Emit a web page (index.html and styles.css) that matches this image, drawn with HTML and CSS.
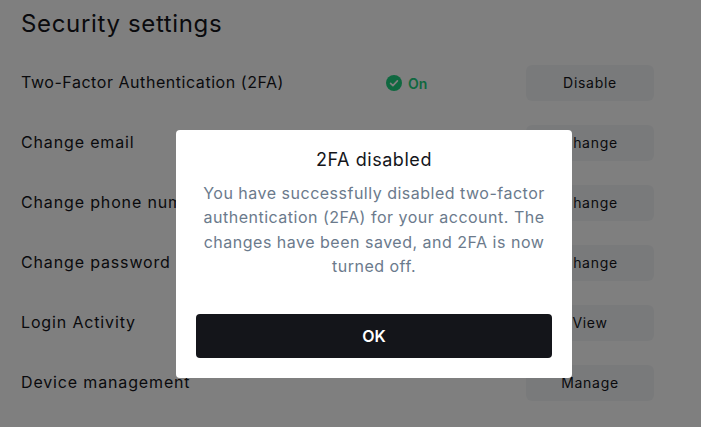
FILE: index.html
```html
<!DOCTYPE html>
<html lang="en">
<head>
<meta charset="utf-8">
<title>Security settings</title>
<link rel="stylesheet" href="styles.css">
</head>
<body>
<main class="page">
  <h1 class="title">Security settings</h1>
  <div class="rows">
    <div class="row">
      <span class="label label-long">Two-Factor Authentication (2FA)</span>
      <span class="status">
        <svg class="status-icon" viewBox="0 0 16 16" width="16" height="16"><circle cx="8" cy="8" r="8" fill="#1fd080"/><path d="M4.6 8.3l2.3 2.3 4.5-4.7" fill="none" stroke="#fff" stroke-width="1.7" stroke-linecap="round" stroke-linejoin="round"/></svg>
        On
      </span>
      <button class="action">Disable</button>
    </div>
    <div class="row"><span class="label">Change email</span><span></span><button class="action">Change</button></div>
    <div class="row"><span class="label">Change phone number</span><span></span><button class="action">Change</button></div>
    <div class="row"><span class="label">Change password</span><span></span><button class="action">Change</button></div>
    <div class="row"><span class="label">Login Activity</span><span></span><button class="action">View</button></div>
    <div class="row"><span class="label">Device management</span><span></span><button class="action">Manage</button></div>
  </div>
</main>
<div class="overlay">
  <div class="modal">
    <h2 class="modal-title">2FA disabled</h2>
    <p class="modal-text">You have successfully disabled two-factor authentication (2FA) for your account. The changes have been saved, and 2FA is now turned off.</p>
    <button class="ok">OK</button>
  </div>
</div>
</body>
</html>
```
FILE: styles.css
```css
* { box-sizing: border-box; }
html, body { margin: 0; height: 100%; }
body {
  background: #fff;
  color: #14151a;
  font-family: "Inter", "Liberation Sans", sans-serif;
  overflow: hidden;
}
.page { padding: 8px 47px 0 21px; }
.title {
  margin: 0;
  font-size: 24px;
  font-weight: 400;
  line-height: 32px;
  letter-spacing: 0.65px;
}
.rows {
  display: flex;
  flex-direction: column;
  gap: 24px;
  margin-top: 25px;
}
.row {
  display: grid;
  grid-template-columns: 365px 140px 128px;
  align-items: center;
  height: 36px;
}
.label {
  font-size: 16px;
  line-height: 22px;
  margin-top: -2px;
  letter-spacing: 0.85px;
  white-space: nowrap;
}
.label-long { letter-spacing: 0.55px; }
.status {
  display: flex;
  align-items: center;
  gap: 6px;
  font-size: 14px;
  font-weight: 600;
  color: #1fd080;
}
.action {
  height: 36px;
  padding: 0 0 2px;
  border: 0;
  border-radius: 6px;
  background: #f3f5f7;
  color: inherit;
  font: inherit;
  font-size: 14px;
  font-weight: 400;
  letter-spacing: 0.7px;
}
.overlay {
  position: fixed;
  inset: 0;
  display: flex;
  align-items: flex-start;
  justify-content: flex-start;
  padding: 130px 0 0 176px;
  background: rgba(0, 0, 0, 0.5);
}
.modal {
  width: 396px;
  height: 248px;
  padding: 18px 20px 20px;
  display: flex;
  flex-direction: column;
  background: #fff;
  border-radius: 4px;
}
.modal-title {
  margin: 0;
  font-size: 18px;
  font-weight: 400;
  line-height: 24px;
  letter-spacing: 0.55px;
  text-align: center;
}
.modal-text {
  margin: 9px 0 0;
  font-size: 16px;
  line-height: 24.3px;
  text-align: center;
  color: #6b7a8c;
  letter-spacing: 0.5px;
}
.ok {
  margin-top: auto;
  height: 44px;
  border: 0;
  border-radius: 4px;
  background: #14151a;
  color: #fff;
  font: inherit;
  font-size: 16px;
  font-weight: 600;
}
```
